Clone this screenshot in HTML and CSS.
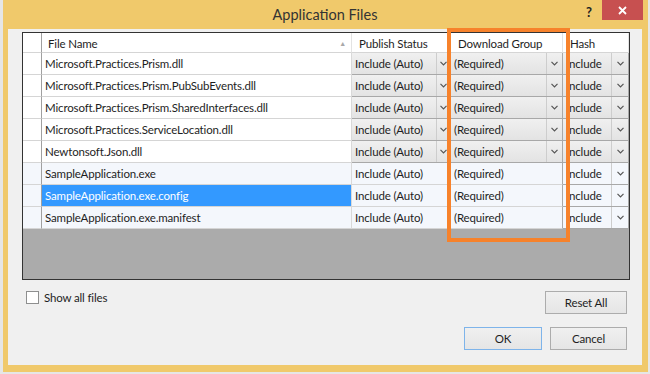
FILE: index.html
```html
<!doctype html>
<html lang="en">
    <head>
        <meta charset="UTF-8" />
        <title>Application Files</title>
        <link rel="stylesheet" href="styles.css">
    </head>
    <body>
        <div class="window">
            <div class="titlebar">
                <div></div>
                <div class="title">Application Files</div>
                <div class="caption-buttons">
                    <span class="help-btn">?</span>
                    <span class="close-btn">
                        <svg width="9" height="9" viewBox="0 0 9 9">
                            <path d="M1 1 L8 8 M8 1 L1 8" stroke="#fff" stroke-width="1.8" />
                        </svg>
                    </span>
                </div>
            </div>

            <div class="client">
                <div class="files-grid">
                    <div class="row header-row">
                        <div class="cell row-head"></div>
                        <div class="cell head-name">
                            <span>File Name</span>
                            <span class="sort-glyph">▲</span>
                        </div>
                        <div class="cell head-publish">Publish Status</div>
                        <div class="cell head-group">Download Group</div>
                        <div class="cell head-hash">Hash</div>
                    </div>

                    <div class="row">
                        <div class="cell row-head"></div>
                        <div class="cell">Microsoft.Practices.Prism.dll</div>
                        <div class="cell combo publish"><span class="combo-text">Include (Auto)</span><span class="combo-arrow"><svg width="7" height="5" viewBox="0 0 7 5"><path d="M0.5 0.8 L3.5 3.8 L6.5 0.8" fill="none" stroke="#555" stroke-width="1.2" /></svg></span></div>
                        <div class="cell combo group"><span class="combo-text">(Required)</span><span class="combo-arrow"><svg width="7" height="5" viewBox="0 0 7 5"><path d="M0.5 0.8 L3.5 3.8 L6.5 0.8" fill="none" stroke="#555" stroke-width="1.2" /></svg></span></div>
                        <div class="cell combo hash"><span class="combo-text">Include</span><span class="combo-arrow"><svg width="7" height="5" viewBox="0 0 7 5"><path d="M0.5 0.8 L3.5 3.8 L6.5 0.8" fill="none" stroke="#555" stroke-width="1.2" /></svg></span></div>
                    </div>

                    <div class="row">
                        <div class="cell row-head"></div>
                        <div class="cell">Microsoft.Practices.Prism.PubSubEvents.dll</div>
                        <div class="cell combo publish"><span class="combo-text">Include (Auto)</span><span class="combo-arrow"><svg width="7" height="5" viewBox="0 0 7 5"><path d="M0.5 0.8 L3.5 3.8 L6.5 0.8" fill="none" stroke="#555" stroke-width="1.2" /></svg></span></div>
                        <div class="cell combo group"><span class="combo-text">(Required)</span><span class="combo-arrow"><svg width="7" height="5" viewBox="0 0 7 5"><path d="M0.5 0.8 L3.5 3.8 L6.5 0.8" fill="none" stroke="#555" stroke-width="1.2" /></svg></span></div>
                        <div class="cell combo hash"><span class="combo-text">Include</span><span class="combo-arrow"><svg width="7" height="5" viewBox="0 0 7 5"><path d="M0.5 0.8 L3.5 3.8 L6.5 0.8" fill="none" stroke="#555" stroke-width="1.2" /></svg></span></div>
                    </div>

                    <div class="row">
                        <div class="cell row-head"></div>
                        <div class="cell">Microsoft.Practices.Prism.SharedInterfaces.dll</div>
                        <div class="cell combo publish"><span class="combo-text">Include (Auto)</span><span class="combo-arrow"><svg width="7" height="5" viewBox="0 0 7 5"><path d="M0.5 0.8 L3.5 3.8 L6.5 0.8" fill="none" stroke="#555" stroke-width="1.2" /></svg></span></div>
                        <div class="cell combo group"><span class="combo-text">(Required)</span><span class="combo-arrow"><svg width="7" height="5" viewBox="0 0 7 5"><path d="M0.5 0.8 L3.5 3.8 L6.5 0.8" fill="none" stroke="#555" stroke-width="1.2" /></svg></span></div>
                        <div class="cell combo hash"><span class="combo-text">Include</span><span class="combo-arrow"><svg width="7" height="5" viewBox="0 0 7 5"><path d="M0.5 0.8 L3.5 3.8 L6.5 0.8" fill="none" stroke="#555" stroke-width="1.2" /></svg></span></div>
                    </div>

                    <div class="row">
                        <div class="cell row-head"></div>
                        <div class="cell">Microsoft.Practices.ServiceLocation.dll</div>
                        <div class="cell combo publish"><span class="combo-text">Include (Auto)</span><span class="combo-arrow"><svg width="7" height="5" viewBox="0 0 7 5"><path d="M0.5 0.8 L3.5 3.8 L6.5 0.8" fill="none" stroke="#555" stroke-width="1.2" /></svg></span></div>
                        <div class="cell combo group"><span class="combo-text">(Required)</span><span class="combo-arrow"><svg width="7" height="5" viewBox="0 0 7 5"><path d="M0.5 0.8 L3.5 3.8 L6.5 0.8" fill="none" stroke="#555" stroke-width="1.2" /></svg></span></div>
                        <div class="cell combo hash"><span class="combo-text">Include</span><span class="combo-arrow"><svg width="7" height="5" viewBox="0 0 7 5"><path d="M0.5 0.8 L3.5 3.8 L6.5 0.8" fill="none" stroke="#555" stroke-width="1.2" /></svg></span></div>
                    </div>

                    <div class="row">
                        <div class="cell row-head"></div>
                        <div class="cell">Newtonsoft.Json.dll</div>
                        <div class="cell combo publish"><span class="combo-text">Include (Auto)</span><span class="combo-arrow"><svg width="7" height="5" viewBox="0 0 7 5"><path d="M0.5 0.8 L3.5 3.8 L6.5 0.8" fill="none" stroke="#555" stroke-width="1.2" /></svg></span></div>
                        <div class="cell combo group"><span class="combo-text">(Required)</span><span class="combo-arrow"><svg width="7" height="5" viewBox="0 0 7 5"><path d="M0.5 0.8 L3.5 3.8 L6.5 0.8" fill="none" stroke="#555" stroke-width="1.2" /></svg></span></div>
                        <div class="cell combo hash"><span class="combo-text">Include</span><span class="combo-arrow"><svg width="7" height="5" viewBox="0 0 7 5"><path d="M0.5 0.8 L3.5 3.8 L6.5 0.8" fill="none" stroke="#555" stroke-width="1.2" /></svg></span></div>
                    </div>

                    <div class="row plain">
                        <div class="cell row-head"></div>
                        <div class="cell">SampleApplication.exe</div>
                        <div class="cell publish">Include (Auto)</div>
                        <div class="cell group">(Required)</div>
                        <div class="cell combo hash"><span class="combo-text">Include</span><span class="combo-arrow"><svg width="7" height="5" viewBox="0 0 7 5"><path d="M0.5 0.8 L3.5 3.8 L6.5 0.8" fill="none" stroke="#555" stroke-width="1.2" /></svg></span></div>
                    </div>

                    <div class="row plain">
                        <div class="cell row-head"></div>
                        <div class="cell selected">SampleApplication.exe.config</div>
                        <div class="cell publish">Include (Auto)</div>
                        <div class="cell group">(Required)</div>
                        <div class="cell combo hash"><span class="combo-text">Include</span><span class="combo-arrow"><svg width="7" height="5" viewBox="0 0 7 5"><path d="M0.5 0.8 L3.5 3.8 L6.5 0.8" fill="none" stroke="#555" stroke-width="1.2" /></svg></span></div>
                    </div>

                    <div class="row plain">
                        <div class="cell row-head"></div>
                        <div class="cell">SampleApplication.exe.manifest</div>
                        <div class="cell publish">Include (Auto)</div>
                        <div class="cell group">(Required)</div>
                        <div class="cell combo hash"><span class="combo-text">Include</span><span class="combo-arrow"><svg width="7" height="5" viewBox="0 0 7 5"><path d="M0.5 0.8 L3.5 3.8 L6.5 0.8" fill="none" stroke="#555" stroke-width="1.2" /></svg></span></div>
                    </div>

                    <!-- рамка выделения колонки -->
                    <div class="highlight"></div>
                </div>

                <div class="footer-top">
                    <label class="check">
                        <span class="check-box"></span>
                        <span>Show all files</span>
                    </label>
                    <button class="win-btn reset-btn">Reset All</button>
                </div>
                <div class="footer-bottom">
                    <button class="win-btn default-btn">OK</button>
                    <button class="win-btn">Cancel</button>
                </div>
            </div>
        </div>
    </body>
</html>
```

FILE: styles.css
```css
* {
    box-sizing: border-box;
}

body {
    margin: 0;
    background: #e6e6e6;
    font-family: Lato, "Noto Sans", sans-serif;
    font-size: 11.5px;
    letter-spacing: -0.15px;
    color: #1e1e1e;
}

.window {
    width: 645px;
    height: 372px;
    margin-left: 3px;
    background: #f0c96b;
    padding: 0 6px 7px 5px;
    display: flex;
    flex-direction: column;
}

.titlebar {
    height: 29px;
    flex: none;
    display: grid;
    grid-template-columns: 1fr auto 1fr;
}

.title {
    font-size: 14.5px;
    line-height: 29px;
    letter-spacing: 0;
    color: #333;
}

.caption-buttons {
    justify-self: end;
    display: flex;
    margin-right: -1px;
}

.help-btn {
    width: 26px;
    height: 20px;
    text-align: center;
    font-weight: bold;
    font-size: 13px;
    line-height: 24px;
    color: #222;
}

.close-btn {
    width: 41px;
    height: 20px;
    background: #c75050;
    display: flex;
    align-items: center;
    justify-content: center;
}

.client {
    flex: 1;
    background: #f0f0f0;
    padding: 3px 12px 0 14px;
}

.files-grid {
    position: relative;
    height: 248px;
    border: 1px solid #333;
    background: #ababab;
}

.row {
    display: grid;
    grid-template-columns: 19px 310px 98px 113px 66px;
    height: 22px;
}

.header-row {
    height: 20px;
}

.cell {
    background: #fff;
    border-right: 1px solid #d9d9d9;
    border-bottom: 1px solid #d5d5d5;
    padding-left: 3px;
    line-height: 22px;
    white-space: nowrap;
    overflow: hidden;
}

.row-head {
    border-right-color: #a0a0a0;
}

.header-row .cell {
    line-height: 21px;
    border-right-color: #e3e3e3;
}

.header-row .row-head {
    border-right-color: #a0a0a0;
}

.head-name {
    display: flex;
    justify-content: space-between;
    padding-left: 6px;
}

.sort-glyph {
    font-size: 7px;
    color: #a8a8a8;
    padding-right: 5px;
}

.head-publish {
    padding-left: 7px;
}

.head-group {
    padding-left: 8px;
}

.head-hash {
    padding-left: 7px;
}

.plain .cell {
    background: #f4f7fc;
}

.plain .group {
    padding-left: 4px;
    border-right-color: #a8a8a8;
}

.plain .cell.selected {
    background: #3399ff;
    color: #fff;
}

.combo {
    display: flex;
    padding: 0;
    background: linear-gradient(#f0f0f0, #e3e3e3);
    border-right-color: #a8a8a8;
    border-bottom-color: #a8a8a8;
}

.combo-text {
    flex: 1;
    padding-left: 3px;
    overflow: hidden;
}

.combo.group .combo-text {
    padding-left: 4px;
}

.combo-arrow {
    flex: none;
    width: 13px;
    border-left: 1px solid #cdcdcd;
    display: flex;
    align-items: center;
    justify-content: center;
}

.combo.group .combo-arrow {
    width: 16px;
}

.combo.hash .combo-arrow {
    width: 17px;
}

.highlight {
    position: absolute;
    left: 424px;
    top: -5px;
    width: 123px;
    height: 214px;
    border: 4px solid #f7822b;
}

.footer-top {
    display: flex;
    justify-content: space-between;
    align-items: flex-start;
    margin-top: 11px;
    padding: 0 3px 0 4px;
}

.check {
    display: flex;
    align-items: center;
    gap: 5px;
}

.check-box {
    width: 13px;
    height: 13px;
    background: #fff;
    border: 1px solid #8e8f8f;
}

.footer-bottom {
    display: flex;
    justify-content: flex-end;
    gap: 8px;
    margin-top: 13px;
    padding-right: 3px;
}

.win-btn {
    font-family: inherit;
    font-size: 11.5px;
    letter-spacing: -0.15px;
    color: #1e1e1e;
    width: 77px;
    height: 23px;
    padding: 0;
    background: linear-gradient(#f0f0f0, #e5e5e5);
    border: 1px solid #acacac;
}

.reset-btn {
    width: 82px;
}

.default-btn {
    width: 78px;
    border-color: #7eb4ea;
}
```
